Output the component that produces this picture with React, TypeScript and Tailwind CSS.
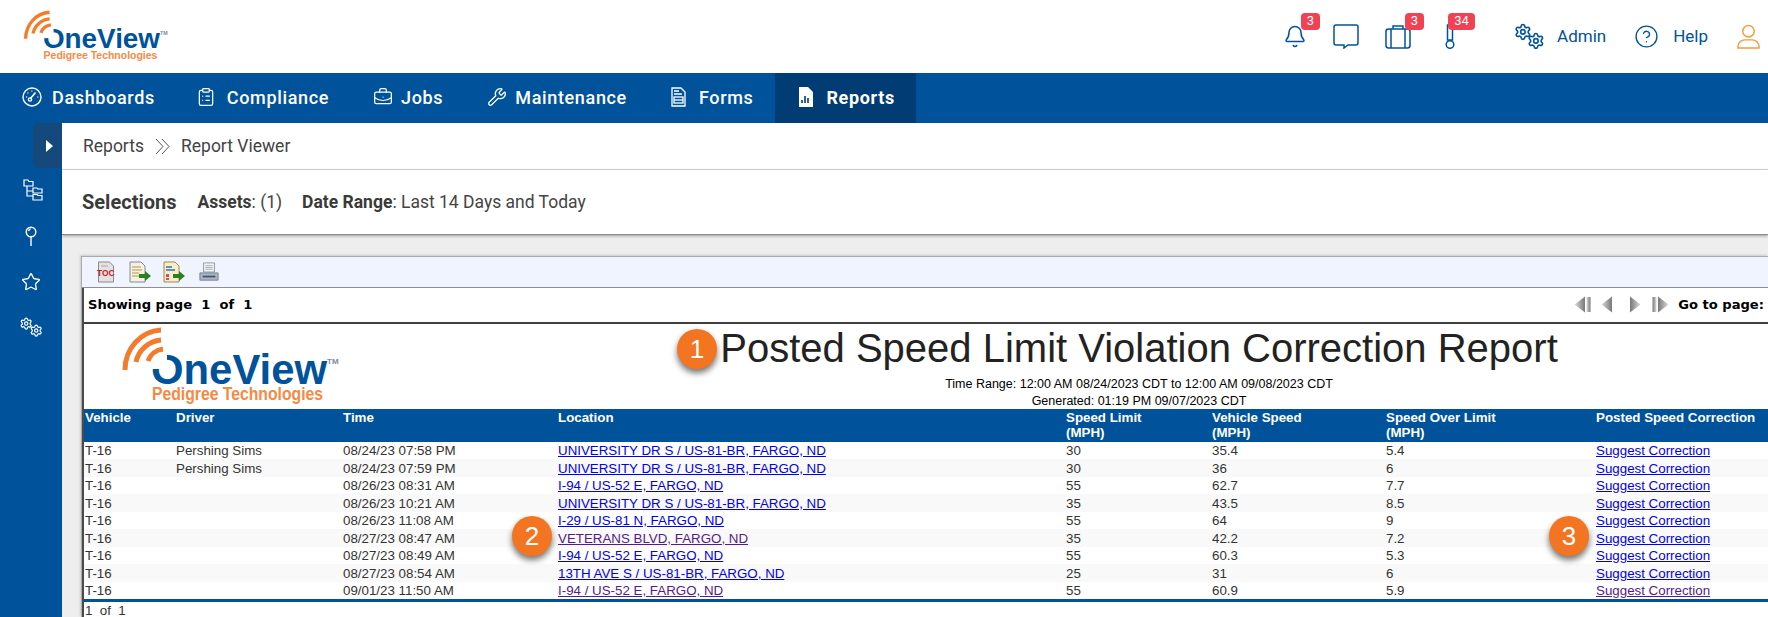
import { Bell, BriefcaseBusiness, CircleHelp, ClipboardList, Settings, Star, Wrench } from "lucide-react";

const rows = [
  { driver: "Pershing Sims", time: "08/24/23 07:58 PM", location: "UNIVERSITY DR S / US-81-BR, FARGO, ND", limit: "30", speed: "35.4", over: "5.4" },
  { driver: "Pershing Sims", time: "08/24/23 07:59 PM", location: "UNIVERSITY DR S / US-81-BR, FARGO, ND", limit: "30", speed: "36", over: "6" },
  { driver: "", time: "08/26/23 08:31 AM", location: "I-94 / US-52 E, FARGO, ND", limit: "55", speed: "62.7", over: "7.7" },
  { driver: "", time: "08/26/23 10:21 AM", location: "UNIVERSITY DR S / US-81-BR, FARGO, ND", limit: "35", speed: "43.5", over: "8.5" },
  { driver: "", time: "08/26/23 11:08 AM", location: "I-29 / US-81 N, FARGO, ND", limit: "55", speed: "64", over: "9" },
  { driver: "", time: "08/27/23 08:47 AM", location: "VETERANS BLVD, FARGO, ND", limit: "35", speed: "42.2", over: "7.2", visited: true },
  { driver: "", time: "08/27/23 08:49 AM", location: "I-94 / US-52 E, FARGO, ND", limit: "55", speed: "60.3", over: "5.3" },
  { driver: "", time: "08/27/23 08:54 AM", location: "13TH AVE S / US-81-BR, FARGO, ND", limit: "25", speed: "31", over: "6" },
  { driver: "", time: "09/01/23 11:50 AM", location: "I-94 / US-52 E, FARGO, ND", limit: "55", speed: "60.9", over: "5.9", visited: true, visitedFix: true },
];

function Logo({ className }: { className: string }) {
  return (
    <svg viewBox="0 0 230 85" className={className}>
      <text x="36" y="60" fontSize="42" fontWeight="700" fill="#00539b" textLength="176" lengthAdjust="spacingAndGlyphs" className="font-['Liberation_Sans']">
        OneView
      </text>
      <path d="M30 22 H52 V45 H30 Z" fill="#fff" />
      <path d="M10 46 A38 40 0 0 1 46 6" fill="none" stroke="#f47b2a" strokeWidth="5" />
      <path d="M21 38 A28 28 0 0 1 46 16" fill="none" stroke="#f47b2a" strokeWidth="5" />
      <path d="M33 37 A18 18 0 0 1 48 25" fill="none" stroke="#f47b2a" strokeWidth="5" />
      <text x="212" y="40" fontSize="8" fontWeight="700" fill="#7d8aa0" className="font-['Liberation_Sans']">
        TM
      </text>
      <text x="37" y="76" fontSize="17.5" fontWeight="700" fill="#f58a45" textLength="171" lengthAdjust="spacingAndGlyphs" className="font-['Liberation_Sans']">
        Pedigree Technologies
      </text>
    </svg>
  );
}

function Gears({ className }: { className: string }) {
  return (
    <span className={`relative block ${className}`}>
      <Settings className="absolute left-0 top-0 w-[60%] h-[66%]" strokeWidth={2.2} />
      <Settings className="absolute right-0 bottom-0 w-[60%] h-[66%]" strokeWidth={2.2} />
    </span>
  );
}

function GaugeIcon() {
  return (
    <svg viewBox="0 0 20 20" className="w-5 h-5" fill="none" stroke="currentColor" strokeWidth="1.4">
      <circle cx="10" cy="10" r="9" />
      <path d="M8.5 11.5 L13.5 5.5" strokeWidth="1.6" />
      <circle cx="8" cy="12.5" r="1.6" />
      <path d="M4 10h.8M5.5 6h.8M9.5 4h.8M15.5 10h.8" />
    </svg>
  );
}

function FormIcon() {
  return (
    <svg viewBox="0 0 15 20" className="w-[15px] h-5" fill="none" stroke="currentColor" strokeWidth="1.3">
      <path d="M1 1h9l4 4v14H1z" />
      <path d="M3 4h5M3 7h8" />
      <rect x="3" y="10" width="9" height="6" />
      <path d="M3 13h9" />
    </svg>
  );
}

function ReportIcon() {
  return (
    <svg viewBox="0 0 15 20" className="w-[15px] h-5">
      <path d="M1 0h9l5 5v15H1z" fill="#fff" />
      <path d="M4 16v-3M7 16v-7M10 16v-5" stroke="#013c74" strokeWidth="1.6" />
    </svg>
  );
}

const tabs = [
  { label: "Dashboards", icon: <GaugeIcon /> },
  { label: "Compliance", icon: <ClipboardList className="-ml-[3px] w-5 h-5 shrink-0" strokeWidth={1.5} /> },
  { label: "Jobs", icon: <BriefcaseBusiness className="w-5 h-5" strokeWidth={1.5} /> },
  { label: "Maintenance", icon: <Wrench className="w-5 h-5" strokeWidth={1.5} /> },
  { label: "Forms", icon: <FormIcon /> },
];

function Badge({ n, className }: { n: string; className: string }) {
  return (
    <span className={`absolute top-[13px] h-[17px] rounded-[4px] bg-[#f14254] text-white text-[13px] leading-[15px] text-center font-['Roboto'] ${className}`}>
      {n}
    </span>
  );
}

function Marker({ n, className }: { n: string; className: string }) {
  return (
    <div className={`absolute w-10 h-10 rounded-full bg-[#f47521] text-white text-[26px] leading-10 text-center font-['Liberation_Sans'] shadow-[0_4px_6px_rgba(0,0,0,0.55)] ${className}`}>
      {n}
    </div>
  );
}

function PagerArrow({ flip, bar }: { flip?: boolean; bar?: boolean }) {
  return (
    <svg viewBox={bar ? "0 0 17 17" : "0 0 11 17"} className={`h-[17px] ${bar ? "w-[17px]" : "w-[11px]"} ${flip ? "-scale-x-100" : ""}`}>
      <defs>
        <linearGradient id="navgrey" x1="0" x2="1" y1="0" y2="0">
          <stop offset="0" stopColor="#dcdcdc" />
          <stop offset="1" stopColor="#777777" />
        </linearGradient>
      </defs>
      {bar && <rect x="12.5" y="1" width="4" height="15" fill="url(#navgrey)" />}
      <path d="M11 0.5 V16.5 L0.5 8.5 Z" fill="url(#navgrey)" />
    </svg>
  );
}

function ToolbarIcons() {
  return (
    <div className="flex items-center h-full">
      <svg viewBox="0 0 20 22" className="ml-[14px] w-5 h-[22px]">
        <path d="M2.5 1h11l4 4v16h-15z" fill="#e2e2e2" stroke="#8a8a8a" />
        <path d="M5 5h7" stroke="#aaa" />
        <text x="1" y="15" fontSize="8.4" fontWeight="700" fill="#d2142a" className="font-['Liberation_Sans']">TOC</text>
      </svg>
      <svg viewBox="0 0 22 22" className="ml-[13px] w-[22px] h-[22px]">
        <path d="M1 1h11l4 4v16H1z" fill="#f1f1e6" stroke="#8a8a8a" />
        <path d="M3 6h9M3 9h10M3 12h7M3 15h7" stroke="#b79a3c" strokeWidth="1.2" />
        <path d="M10 13h6v-3l6 5-6 5v-3h-6z" fill="#2f7d1f" />
      </svg>
      <svg viewBox="0 0 22 22" className="ml-[12px] w-[22px] h-[22px]">
        <path d="M1 1h11l4 4v16H1z" fill="#f6eecb" stroke="#a08a46" />
        <path d="M3 6h6M3 9h9" stroke="#3b6fb5" strokeWidth="1.3" />
        <path d="M3 13h3v3H3zM3 17h3v2H3z" fill="#d64a7a" />
        <path d="M10 13h6v-3l6 5-6 5v-3h-6z" fill="#2f7d1f" />
      </svg>
      <svg viewBox="0 0 22 22" className="ml-[14px] w-[20px] h-[22px]">
        <path d="M5 1h12v10H5z" fill="#f2f2f2" stroke="#8b95a3" />
        <path d="M7 4h8M7 6h8M7 8h8" stroke="#a5adb8" />
        <path d="M1 12h20v8H1z" fill="#a9b6c6" stroke="#6f7f92" />
        <path d="M4 16h14" stroke="#44566b" strokeWidth="2" />
      </svg>
    </div>
  );
}

export default function App() {
  return (
    <div className="h-[617px] w-[1768px] overflow-hidden bg-white flex flex-col font-['Roboto',sans-serif]">
      <header className="h-[73px] shrink-0 relative flex items-center text-[#00539b]">
        <Logo className="ml-[19px] w-[153px] h-[57px]" />
        <div className="ml-auto flex items-center pr-[8px] h-full">
          <Bell className="w-[24px] h-[25px]" strokeWidth={1.5} />
          <svg viewBox="0 0 26 25" className="ml-[26px] w-[26px] h-[25px]" fill="none" stroke="currentColor" strokeWidth="1.5">
            <path d="M3 1h20a2 2 0 0 1 2 2v16a2 2 0 0 1-2 2h-8l-4 3v-3H3a2 2 0 0 1-2-2V3a2 2 0 0 1 2-2z" />
          </svg>
          <svg viewBox="0 0 26 25" className="ml-[26px] w-[26px] h-[25px]" fill="none" stroke="currentColor" strokeWidth="1.5">
            <rect x="1" y="5" width="24" height="19" rx="2.5" />
            <path d="M6 5v19M20 5v19M8 5V2h10v3" />
          </svg>
          <svg viewBox="0 0 10 25" className="ml-[34px] w-[10px] h-[25px]" fill="none" stroke="currentColor" strokeWidth="1.5">
            <path d="M2.5 1h5v15h-5z" />
            <circle cx="5" cy="20.5" r="3.8" />
          </svg>
          <Gears className="ml-[58px] w-[33px] h-[27px]" />
          <span className="ml-[11px] text-[17px]">Admin</span>
          <CircleHelp className="ml-[28px] w-[25px] h-[25px]" strokeWidth={1.3} />
          <span className="ml-[14px] text-[17px]">Help</span>
          <svg viewBox="0 0 24 26" className="ml-[29px] w-[23px] h-[26px] text-[#f29a3e]" fill="none" stroke="currentColor" strokeWidth="1.5">
            <circle cx="12" cy="7" r="6" />
            <path d="M1 24.5v-2a7 7 0 0 1 7-6.5h8a7 7 0 0 1 7 6.5v2z" />
          </svg>
        </div>
        <Badge n="3" className="left-[1301px] w-[19px]" />
        <Badge n="3" className="left-[1405px] w-[19px]" />
        <Badge n="34" className="left-[1448px] w-[27px]" />
      </header>

      <nav className="h-[50px] shrink-0 pb-[2px] bg-[#00539b] flex text-white text-[18px] tracking-[0.65px] font-medium">
        {tabs.map((t, i) => (
          <div key={t.label} className="flex items-center px-[22px]">
            <span className={i === 0 ? "w-[30px] flex" : "w-[28px] flex"}>{t.icon}</span>
            <span>{t.label}</span>
          </div>
        ))}
        <div className="-mb-[2px] pb-[2px] flex items-center pl-[23px] pr-[21px] bg-[#013c74] font-bold">
          <span className="w-[28px] flex"><ReportIcon /></span>
          <span>Reports</span>
        </div>
      </nav>

      <div className="flex-1 flex min-h-0">
        <aside className="w-[62px] shrink-0 bg-[#00539b] flex flex-col items-center text-white">
          <div className="self-end w-[29px] h-[45px] rounded-l-[5px] bg-[#15497c] flex items-center justify-center">
            <span className="ml-[3px] border-y-[6px] border-y-transparent border-l-[7px] border-l-white" />
          </div>
          <svg viewBox="0 0 20 22" className="mt-[11px] ml-[4px] w-5 h-[22px]" fill="none" stroke="currentColor" strokeWidth="1.2">
            <path d="M1 1h4l1 1.5h4V7H1z" />
            <path d="M4 7v10h6M4 12h6" />
            <path d="M10 9h4l1 1h4v4h-9zM10 15.5h4l1 1h4V21h-9z" />
          </svg>
          <svg viewBox="0 0 12 20" className="mt-[25px] w-3 h-5" fill="none" stroke="currentColor" strokeWidth="1.4">
            <circle cx="6" cy="6" r="4.8" />
            <path d="M6 11v9M3.5 5a3 3 0 0 1 2-2" />
          </svg>
          <Star className="mt-[26px] w-5 h-5" strokeWidth={1.6} />
          <Gears className="mt-[25px] w-[24px] h-[20px]" />
        </aside>

        <main className="flex-1 min-w-0 bg-[#eeeeee] flex flex-col relative">
          <div className="h-[47px] shrink-0 bg-white border-b border-[#d9d9d9] flex items-center pl-[21px] text-[17.5px] text-[#444]">
            <span>Reports</span>
            <svg viewBox="0 0 15 17" className="ml-[11px] w-[15px] h-[17px] text-[#555]" fill="none" stroke="currentColor" strokeWidth="1">
              <path d="M1 1l7 7.5-7 7.5M7 1l7 7.5-7 7.5" />
            </svg>
            <span className="ml-[11px]">Report Viewer</span>
          </div>
          <div className="h-[65px] shrink-0 bg-white border-b border-[#8a8a8a] shadow-[0_1px_3px_rgba(0,0,0,0.35)] flex items-center pl-[20px] text-[#444] text-[17.5px]">
            <b className="text-[20px] font-bold text-[#3a3a3a]">Selections</b>
            <span className="ml-[21px]"><b className="font-bold text-[#3a3a3a]">Assets</b>: (1)</span>
            <span className="ml-[20px]"><b className="font-bold text-[#3a3a3a]">Date Range</b>: Last 14 Days and Today</span>
          </div>

          <div className="ml-[19px] mt-[21px] flex-1 min-h-0 bg-white border-l border-t border-[#aaaaaa] shadow-[-1px_-1px_2px_rgba(0,0,0,0.15)] relative">
            <div className="h-[31px] bg-[#eff4fe] border-b border-[#8f8f8f]">
              <ToolbarIcons />
            </div>
            <div className="border-l-2 border-[#4a4a4a]">
              <div className="h-[34px] flex items-center pl-[4px] font-['DejaVu_Sans'] font-bold text-[13.1px] text-black whitespace-pre">
                <span>Showing page  1  of  1</span>
                <div className="ml-auto flex items-center pr-[4px]">
                  <PagerArrow bar />
                  <span className="ml-[10px] flex"><PagerArrow /></span>
                  <span className="ml-[18px] flex"><PagerArrow flip /></span>
                  <span className="ml-[11px] flex"><PagerArrow flip bar /></span>
                  <span className="ml-[9px]">Go to page:</span>
                </div>
              </div>
              <div className="h-[87px] border-t-2 border-[#3f3f3f] flex font-['Liberation_Sans',sans-serif] text-black">
                <Logo className="ml-[31px] w-[230px] h-[85px] shrink-0" />
                <div className="ml-[344px] w-[900px] shrink-0 text-center">
                  <div className="mt-[1px] text-[40px] leading-[46px] text-[#222]">Posted Speed Limit Violation Correction Report</div>
                  <div className="mt-[5px] text-[12.5px] leading-[17px]">Time Range: 12:00 AM 08/24/2023 CDT to 12:00 AM 09/08/2023 CDT</div>
                  <div className="text-[12.5px] leading-[17px]">Generated: 01:19 PM 09/07/2023 CDT</div>
                </div>
              </div>
              <table className="w-[1684px] table-fixed border-collapse font-['Liberation_Sans',sans-serif] text-[13.33px] text-[#333]">
                <colgroup>
                  <col className="w-[91px]" />
                  <col className="w-[167px]" />
                  <col className="w-[215px]" />
                  <col className="w-[508px]" />
                  <col className="w-[146px]" />
                  <col className="w-[174px]" />
                  <col className="w-[210px]" />
                  <col className="w-[173px]" />
                </colgroup>
                <thead>
                  <tr className="h-[33px] bg-[#00539b] text-white font-bold text-left align-top leading-[15px]">
                    <th className="pl-[1px] pt-[1px]">Vehicle</th>
                    <th className="pl-[1px] pt-[1px]">Driver</th>
                    <th className="pl-[1px] pt-[1px]">Time</th>
                    <th className="pl-[1px] pt-[1px]">Location</th>
                    <th className="pl-[1px] pt-[1px]">Speed Limit<br />(MPH)</th>
                    <th className="pl-[1px] pt-[1px]">Vehicle Speed<br />(MPH)</th>
                    <th className="pl-[1px] pt-[1px]">Speed Over Limit<br />(MPH)</th>
                    <th className="pl-[1px] pt-[1px]">Posted Speed Correction</th>
                  </tr>
                </thead>
                <tbody className="leading-[16px]">
                  {rows.map((r, i) => (
                    <tr key={i} className={i % 2 ? "h-[18px] bg-[#f9f9f9]" : "h-[17px] bg-white"}>
                      <td className="pl-[1px] pt-[1px]">T-16</td>
                      <td className="pl-[1px] pt-[1px]">{r.driver}</td>
                      <td className="pl-[1px] pt-[1px]">{r.time}</td>
                      <td className="pl-[1px] pt-[1px]">
                        <a className={`underline ${r.visited ? "text-[#551a8b]" : "text-[#0000ee]"}`}>{r.location}</a>
                      </td>
                      <td className="pl-[1px] pt-[1px]">{r.limit}</td>
                      <td className="pl-[1px] pt-[1px]">{r.speed}</td>
                      <td className="pl-[1px] pt-[1px]">{r.over}</td>
                      <td className="pl-[1px] pt-[1px]">
                        <a className={`underline ${r.visitedFix ? "text-[#551a8b]" : "text-[#0000ee]"}`}>Suggest Correction</a>
                      </td>
                    </tr>
                  ))}
                </tbody>
              </table>
              <div className="border-t-[3px] border-[#00539b] pl-[1px] pt-[1px] font-['Liberation_Sans',sans-serif] text-[13.33px] leading-[16px] text-[#333] whitespace-pre">1  of  1</div>
            </div>
            <Marker n="1" className="left-[595px] top-[72px]" />
            <Marker n="2" className="left-[430px] top-[259px]" />
            <Marker n="3" className="left-[1467px] top-[259px]" />
          </div>
        </main>
      </div>
    </div>
  );
}
